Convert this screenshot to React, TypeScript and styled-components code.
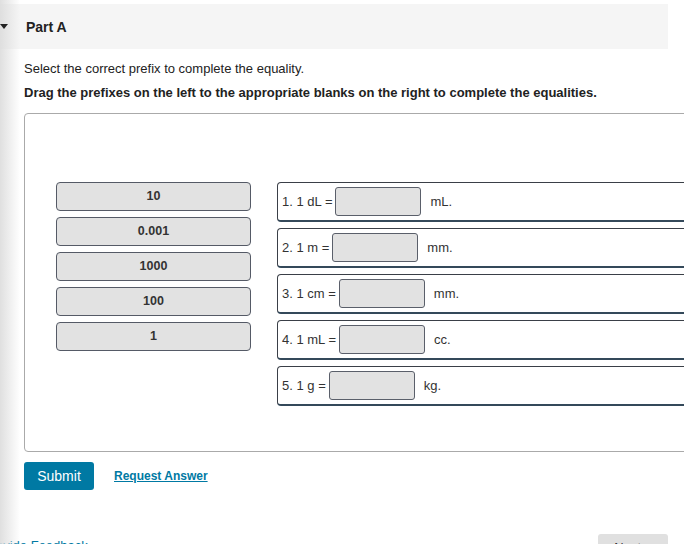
import React from "react";
import styled, { createGlobalStyle } from "styled-components";

const Global = createGlobalStyle`
  html, body { margin: 0; padding: 0; background: #fff; }
  body { font-family: "Liberation Sans", Arial, sans-serif; color: #333; width: 684px; height: 544px; overflow: hidden; }
`;

const Page = styled.div`
  position: relative;
  width: 684px;
  height: 544px;
  overflow: hidden;
  padding-top: 4px;
  box-sizing: border-box;
`;

const LeftShade = styled.div`
  position: absolute;
  left: 0;
  top: 0;
  bottom: 0;
  width: 20px;
  background: linear-gradient(to right, rgba(220,220,220,0.9), rgba(255,255,255,0));
  pointer-events: none;
`;

const Header = styled.div`
  display: flex;
  align-items: center;
  width: 668px;
  height: 45px;
  background: #f5f5f5;
`;

const Caret = styled.span`
  position: relative;
  z-index: 2;
  width: 0;
  height: 0;
  border-left: 4px solid transparent;
  border-right: 4px solid transparent;
  border-top: 5px solid #222;
  margin-right: 18px;
`;

const Title = styled.h2`
  margin: 0;
  font-size: 14px;
  font-weight: bold;
  color: #222;
`;

const Body = styled.div`
  padding-left: 24px;
`;

const Prompt = styled.p<{ $bold?: boolean }>`
  margin: 0;
  font-size: 13px;
  font-weight: ${(p) => (p.$bold ? "bold" : "normal")};
  color: #222;
  line-height: 16px;
`;

const PromptWrap = styled.div`
  display: flex;
  flex-direction: column;
  gap: 8px;
  padding-top: 12px;
`;

const Board = styled.div`
  margin-top: 12px;
  width: 700px;
  height: 339px;
  box-sizing: border-box;
  border: 1px solid #aaa;
  border-radius: 4px;
  display: flex;
  align-items: flex-start;
  padding: 68px 0 0 31px;
  gap: 26px;
`;

const Tiles = styled.div`
  display: flex;
  flex-direction: column;
  gap: 6px;
  width: 195px;
`;

const Tile = styled.div`
  height: 29px;
  box-sizing: border-box;
  border: 1.5px solid #555a66;
  border-radius: 4px;
  background: #e2e2e2;
  display: flex;
  justify-content: center;
  padding-top: 6px;
  font-size: 12.5px;
  font-weight: bold;
  color: #333;
`;

const Targets = styled.div`
  display: flex;
  flex-direction: column;
  gap: 6px;
  flex: 1;
`;

const Target = styled.div`
  height: 40px;
  box-sizing: border-box;
  border: 1px solid #3a3f47;
  border-bottom: 2px solid #34495a;
  border-radius: 4px;
  display: flex;
  align-items: center;
  padding-left: 4px;
  font-size: 13px;
  color: #333;
`;

const Drop = styled.span`
  width: 86px;
  height: 29px;
  box-sizing: border-box;
  margin-left: 3px;
  margin-right: 9px;
  background: #e2e2e2;
  border: 1px solid #5a5f6a;
  border-radius: 3px;
`;

const Actions = styled.div`
  display: flex;
  align-items: center;
  gap: 20px;
  margin-top: 10px;
`;

const Submit = styled.button`
  width: 70px;
  height: 28px;
  border: none;
  border-radius: 3px;
  background: #0079a3;
  color: #fff;
  font-family: "Liberation Sans", Arial, sans-serif;
  font-size: 14px;
  padding: 0;
`;

const LinkText = styled.a`
  font-size: 12px;
  font-weight: bold;
  color: #0079a3;
  text-decoration: underline;
`;

const Footer = styled.div`
  display: flex;
  justify-content: space-between;
  align-items: flex-start;
  margin-top: 44px;
  width: 668px;
`;

const Feedback = styled.span`
  margin-left: -17px;
  margin-top: 4px;
  font-size: 13px;
  color: #0079a3;
`;

const Next = styled.span`
  width: 70px;
  height: 26px;
  background: #e0e0e0;
  border-radius: 3px;
  font-size: 13px;
  color: #333;
  display: flex;
  justify-content: center;
  padding-top: 6px;
  box-sizing: border-box;
`;

const tiles = ["10", "0.001", "1000", "100", "1"];
const targets = [
  ["1. 1 dL =", "mL."],
  ["2. 1 m =", "mm."],
  ["3. 1 cm =", "mm."],
  ["4. 1 mL =", "cc."],
  ["5. 1 g =", "kg."],
];

export default function App() {
  return (
    <Page>
      <Global />
      <Header>
        <Caret />
        <Title>Part A</Title>
      </Header>
      <Body>
        <PromptWrap>
          <Prompt>Select the correct prefix to complete the equality.</Prompt>
          <Prompt $bold>Drag the prefixes on the left to the appropriate blanks on the right to complete the equalities.</Prompt>
        </PromptWrap>
        <Board>
          <Tiles>
            {tiles.map((t) => (
              <Tile key={t}>{t}</Tile>
            ))}
          </Tiles>
          <Targets>
            {targets.map(([l, u]) => (
              <Target key={l}>
                {l}
                <Drop />
                {u}
              </Target>
            ))}
          </Targets>
        </Board>
        <Actions>
          <Submit>Submit</Submit>
          <LinkText href="#">Request Answer</LinkText>
        </Actions>
      </Body>
      <Footer>
        <Feedback>Provide Feedback</Feedback>
        <Next>Next ▸</Next>
      </Footer>
      <LeftShade />
    </Page>
  );
}
